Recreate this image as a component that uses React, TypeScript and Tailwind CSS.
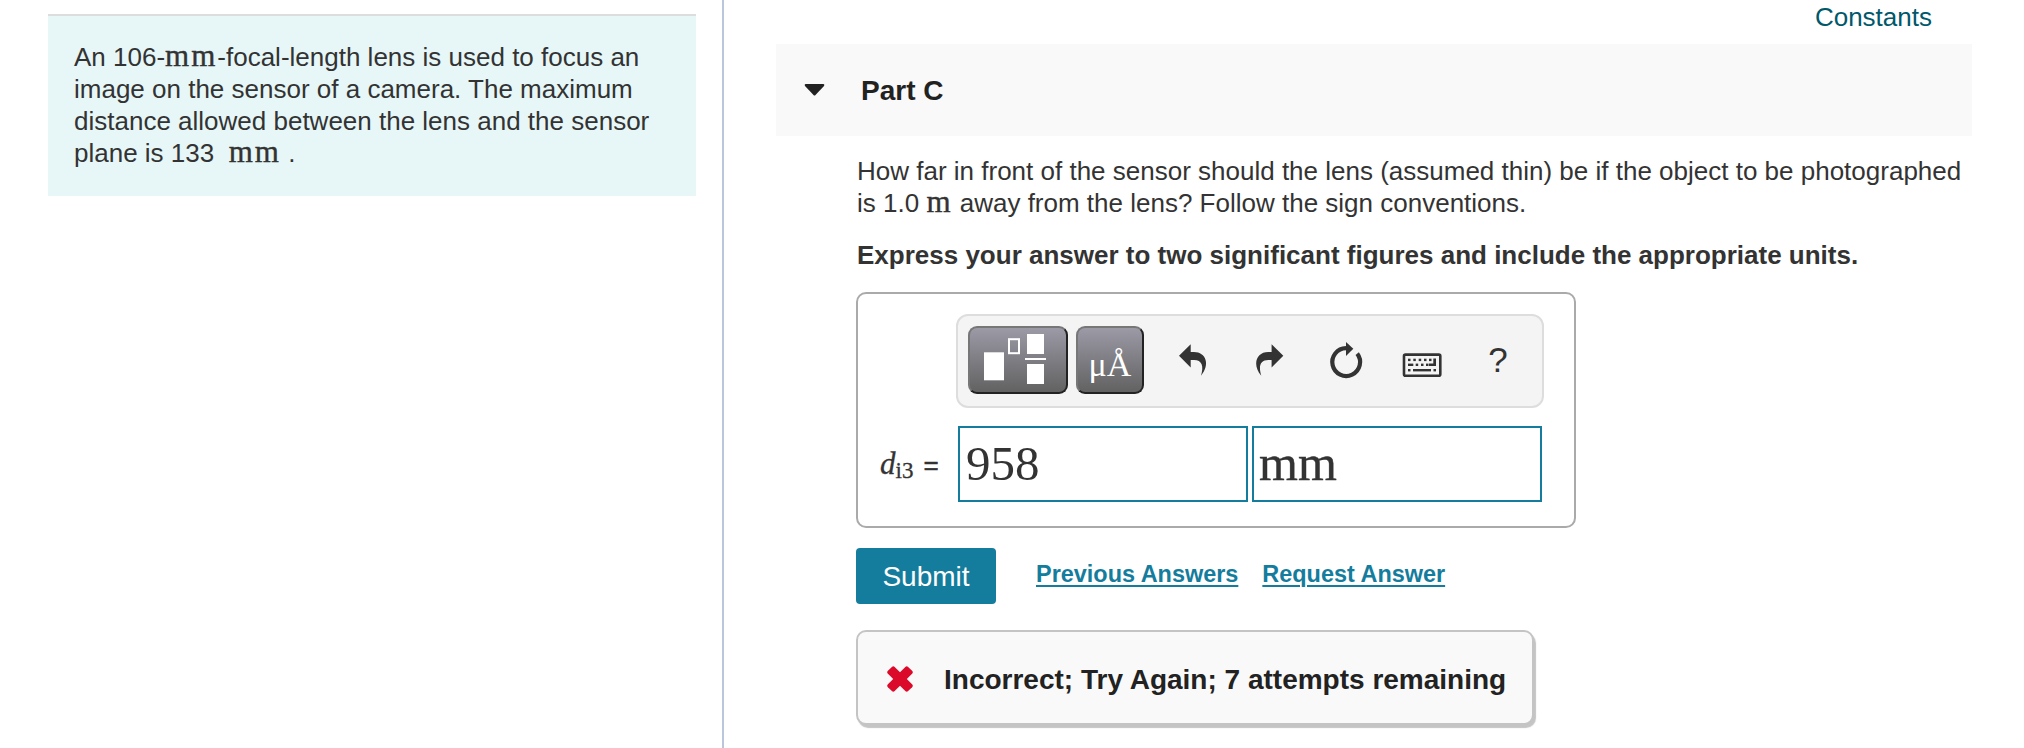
import type { ReactNode } from "react";

const sans = "font-['Liberation_Sans',Arial,sans-serif]";
const serif = "font-['Liberation_Serif','Times_New_Roman',serif]";

const toolButton =
  "flex h-[68px] items-center justify-center rounded-[9px] border-2 border-t-[#777] border-l-[#777] border-r-[#222] border-b-[#222] bg-linear-to-b from-[#9c9aa6] to-[#626262]";

// Inline unit set in the math face
function Unit({ children }: { children: ReactNode }) {
  return (
    <span className={`${serif} text-[31px] leading-[0] tracking-[2px] [-webkit-text-stroke:0.4px_#333]`}>
      {children}
    </span>
  );
}

function TemplateIcon() {
  return (
    <svg width="96" height="64" viewBox="0 0 96 64" fill="#fff">
      <rect x="14" y="24.3" width="20" height="28" />
      <rect x="39" y="11.2" width="10" height="14" fill="none" stroke="#fff" strokeWidth="2" />
      <rect x="57" y="6" width="17" height="20" />
      <rect x="55" y="30" width="21" height="2" />
      <rect x="57" y="36" width="17" height="20" />
    </svg>
  );
}

const undoPath =
  "M23 29.7 34.7 18.3V26H38C50 26 54.5 38.5 45 49.7 48 40 46 34 38 34H34.7V41.5Z";

function ToolIcon({ children }: { children: ReactNode }) {
  return (
    <button className="h-[68px] w-[76px]">
      <svg width="76" height="68" viewBox="0 0 76 68" fill="#333">
        {children}
      </svg>
    </button>
  );
}

function KeyboardKeys() {
  return (
    <>
      <rect x="20" y="28.6" width="36.3" height="21.2" rx="1.5" fill="none" stroke="#333" strokeWidth="2.6" />
      {[24, 29.3, 34.7, 40, 45].map((x) => (
        <rect key={x} x={x} y="32.7" width="2.5" height="2.4" />
      ))}
      <path d="M49.3 32.5H52V40H45V37.6H49.3Z" />
      <rect x="24" y="37.6" width="5.3" height="2.4" />
      {[31.7, 37, 42].map((x) => (
        <rect key={x} x={x} y="37.6" width="2.5" height="2.4" />
      ))}
      <rect x="24" y="43" width="2.5" height="2.4" />
      <rect x="29" y="43" width="18" height="2.4" />
      <rect x="49.5" y="43" width="2.5" height="2.4" />
    </>
  );
}

function Toolbar() {
  return (
    <div className="flex h-[94px] w-[588px] items-center rounded-[12px] border-2 border-[#ddd] bg-[#f4f4f4] pb-0.5 pl-[10px]">
      <button className={`${toolButton} w-[100px]`}>
        <TemplateIcon />
      </button>
      <button className={`${toolButton} ${serif} mr-3 ml-2 w-[68px] pt-[9px] text-[34px] leading-none text-white`}>
        μÅ
      </button>
      <ToolIcon>
        <path d={undoPath} />
      </ToolIcon>
      <ToolIcon>
        <path d={undoPath} transform="translate(74.3 0) scale(-1 1)" />
      </ToolIcon>
      <ToolIcon>
        <path d="M38 22.2A13.9 13.9 0 1 0 49.2 27.6" fill="none" stroke="#333" strokeWidth="4.2" />
        <path d="M38 16 45.3 22.7 38 30Z" />
      </ToolIcon>
      <ToolIcon>
        <KeyboardKeys />
      </ToolIcon>
      <button className="h-[68px] w-[76px] text-[35px] leading-[66px] text-[#333]">?</button>
    </div>
  );
}

function AnswerBox() {
  return (
    <div className="-ml-px mt-[21px] h-[236px] w-[720px] rounded-[10px] border-2 border-[#aaa] pt-5 pl-[98px]">
      <Toolbar />
      <div className="mt-[18px] -ml-[76px] flex h-[76px]">
        <div className={`${serif} w-[76px] pt-[22px] text-[31px] leading-8 whitespace-nowrap`}>
          <i className="[-webkit-text-stroke:0.3px_#333]">d</i>
          <span className="relative top-[4px] text-[23px] leading-[0] [-webkit-text-stroke:0.3px_#333]">i3</span>
          <span className={`${sans} ml-[10px] text-[26px] leading-[0] [-webkit-text-stroke:0.5px_#333]`}>=</span>
        </div>
        <div className={`${serif} ml-0.5 w-[290px] border-2 border-[#147c9c] pl-1.5 text-[49px] leading-[72px]`}>
          958
        </div>
        <div className={`${serif} ml-1 w-[290px] border-2 border-[#147c9c] pl-[5px] text-[50px] leading-[71px] [-webkit-text-stroke:0.4px_#333]`}>
          mm
        </div>
      </div>
    </div>
  );
}

function Feedback() {
  return (
    <div className="-ml-px mt-[26px] flex h-[95px] w-[678px] items-center rounded-[10px] border-2 border-[#c4c4c4] bg-[#f9f9f9] pt-[3px] pl-[29px] text-[28px] font-bold text-[#222] shadow-[2px_3px_1px_#c4c4c4]">
      <svg width="26" height="26" viewBox="-13 -13 26 26" className="mr-[31px] shrink-0" fill="#db0a2b">
        <rect x="-14.3" y="-4.8" width="28.6" height="9.6" rx="2" transform="rotate(45)" />
        <rect x="-14.3" y="-4.8" width="28.6" height="9.6" rx="2" transform="rotate(-45)" />
      </svg>
      <span className="pt-0.5 whitespace-nowrap">Incorrect; Try Again; 7 attempts remaining</span>
    </div>
  );
}

export default function App() {
  return (
    <div className={`${sans} flex h-[748px] w-[2024px] overflow-hidden bg-white text-[26px] leading-8 text-[#333]`}>
      <aside className="w-[724px] shrink-0 border-r-2 border-[#bac7db] pt-[14px] pl-12">
        <div className="h-[182px] w-[648px] border-t-2 border-[#ddd] bg-[#e7f7f8] pt-[25px] pl-[26px] whitespace-nowrap">
          An 106-<Unit>mm</Unit>-focal-length lens is used to focus an
          <br />
          image on the sensor of a camera. The maximum
          <br />
          distance allowed between the lens and the sensor
          <br />
          plane is 133 &nbsp;<Unit>mm</Unit> .
        </div>
      </aside>

      <main className="ml-[52px] w-[1196px]">
        <div className="flex h-11 justify-end pt-px pr-10 text-[#00586b]">
          <a>Constants</a>
        </div>
        <div className="flex h-[92px] items-center bg-[#f9f9f9] pl-7 text-[28px] font-bold text-[#222]">
          <svg width="21" height="12" viewBox="0 0 21 12" className="mr-9">
            <path d="M1.5 0H19.5Q21 .3 20 2L11.5 11Q10.5 12 9.5 11L1 2Q0 .3 1.5 0Z" fill="#222" />
          </svg>
          <h2 className="pt-px">Part C</h2>
        </div>

        <div className="pl-[81px] whitespace-nowrap">
          <p className="mt-[19px]">
            How far in front of the sensor should the lens (assumed thin) be if the object to be photographed
            <br />
            is 1.0 <Unit>m</Unit> away from the lens? Follow the sign conventions.
          </p>
          <p className="mt-5 font-bold">
            Express your answer to two significant figures and include the appropriate units.
          </p>

          <AnswerBox />

          <div className="-ml-px mt-5 flex h-14">
            <button className="w-[140px] rounded-[4px] bg-[#147c9c] pt-px text-[28px] text-white">Submit</button>
            <div className="ml-10 flex gap-6 pt-[10px] text-[23.45px] font-bold text-[#147c9c]">
              <a className="underline decoration-2 underline-offset-[3px]">Previous Answers</a>
              <a className="underline decoration-2 underline-offset-[3px]">Request Answer</a>
            </div>
          </div>

          <Feedback />
        </div>
      </main>
    </div>
  );
}
